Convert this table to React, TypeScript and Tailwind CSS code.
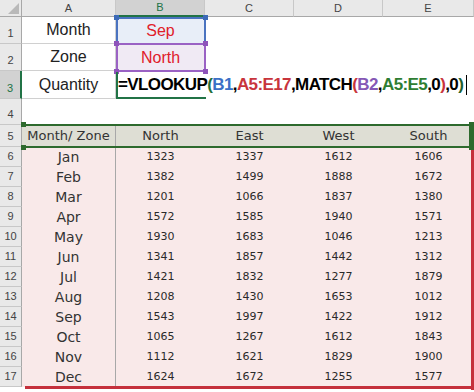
import React from "react";

const cols = ["A", "B", "C", "D", "E"];

const rows: [string, number, number, number, number][] = [
  ["Jan", 1323, 1337, 1612, 1606],
  ["Feb", 1382, 1499, 1888, 1672],
  ["Mar", 1201, 1066, 1837, 1380],
  ["Apr", 1572, 1585, 1940, 1571],
  ["May", 1930, 1683, 1046, 1213],
  ["Jun", 1341, 1857, 1442, 1312],
  ["Jul", 1421, 1832, 1277, 1879],
  ["Aug", 1208, 1430, 1653, 1012],
  ["Sep", 1543, 1997, 1422, 1912],
  ["Oct", 1065, 1267, 1612, 1843],
  ["Nov", 1112, 1621, 1829, 1900],
  ["Dec", 1624, 1672, 1255, 1577],
];

function RowHead({ n, active }: { n: number; active?: boolean }) {
  return (
    <div
      className={
        "flex items-end justify-center pb-[2px] text-[11px] border-b border-[#c8c8c8] " +
        (active
          ? "bg-[#d2d2d2] text-[#217346] border-r-2 border-r-[#217346]"
          : "bg-[#e9e9e9] text-[#444] border-r border-r-[#a8a8a8]")
      }
    >
      {n}
    </div>
  );
}

function Handle({ className }: { className: string }) {
  return <div className={"absolute w-[5px] h-[5px] " + className} />;
}

export default function App() {
  return (
    <div className="relative w-[474px] h-[392px] overflow-hidden bg-white font-['Liberation_Sans',sans-serif]">
      <div className="grid grid-cols-[22px_94px_89px_89px_89px_91px] grid-rows-[17px_27px_27px_28px_26px_22px_repeat(12,20px)]">
        {/* column headers */}
        <div className="relative bg-[#e9e9e9] border-r border-b border-[#a8a8a8]">
          <div className="absolute right-[2px] bottom-[2px] w-0 h-0 border-l-[11px] border-l-transparent border-b-[11px] border-b-[#b9b9b9]" />
        </div>
        {cols.map((c) => (
          <div
            key={c}
            className={
              "flex items-center justify-center text-[11px] border-r border-[#c8c8c8] " +
              (c === "B"
                ? "bg-[#d2d2d2] text-[#217346] border-b-2 border-b-[#217346]"
                : "bg-[#e9e9e9] text-[#444] border-b border-b-[#a8a8a8]")
            }
          >
            {c}
          </div>
        ))}

        {/* row 1 */}
        <RowHead n={1} />
        <div className="flex items-center justify-center text-[16px] text-[#222] border-r border-b border-[#d0d0d0]">Month</div>
        <div className="flex items-center justify-center text-[16px] text-[#e0202a] bg-[#e8eef8]">Sep</div>
        <div />
        <div />
        <div />

        {/* row 2 */}
        <RowHead n={2} />
        <div className="flex items-center justify-center text-[16px] text-[#222] border-r border-b border-[#d0d0d0]">Zone</div>
        <div className="flex items-center justify-center text-[16px] text-[#e0202a] bg-[#f0eaf4]">North</div>
        <div />
        <div />
        <div />

        {/* row 3 */}
        <RowHead n={3} active />
        <div className="flex items-center justify-center text-[16px] text-[#222] border-r border-b border-[#d0d0d0]">Quantity</div>
        <div className="col-span-4 flex items-center pl-[2px] whitespace-nowrap text-[17px] font-bold tracking-[-0.6px] text-black">
          <span>=VLOOKUP</span>
          <span className="text-[#1f6e3a]">(</span>
          <span className="text-[#3b6fc6]">B1</span>
          <span>,</span>
          <span className="text-[#c8343c]">A5:E17</span>
          <span>,MATCH</span>
          <span className="text-[#c8343c]">(</span>
          <span className="text-[#8557b5]">B2</span>
          <span>,</span>
          <span className="text-[#2e7d32]">A5:E5</span>
          <span>,0</span>
          <span className="text-[#c8343c]">)</span>
          <span>,0</span>
          <span className="text-[#1f5f2f]">)</span>
          <span className="ml-[3px] w-px h-[20px] bg-black" />
        </div>

        {/* row 4 */}
        <RowHead n={4} />
        <div className="col-span-5" />

        {/* row 5 header */}
        <RowHead n={5} />
        <div className="flex items-center justify-center text-[13px] text-[#333] bg-[#deded4] border-r border-[#a8a8a8] font-['DejaVu_Sans',sans-serif]">
          Month/ Zone
        </div>
        {["North", "East", "West", "South"].map((z) => (
          <div key={z} className="flex items-center justify-center text-[13px] text-[#333] bg-[#deded4] font-['DejaVu_Sans',sans-serif]">
            {z}
          </div>
        ))}

        {/* data */}
        {rows.map((r, i) => (
          <React.Fragment key={r[0]}>
            <RowHead n={i + 6} />
            <div className="flex items-center justify-center text-[14px] text-[#333] bg-[#f9e9e9] border-r border-[#a8a8a8] font-['DejaVu_Sans',sans-serif]">
              {r[0]}
            </div>
            {r.slice(1).map((v, j) => (
              <div key={j} className="flex items-center justify-center text-[11px] text-[#2a2a2a] bg-[#f9e9e9] font-['DejaVu_Sans',sans-serif]">
                {v}
              </div>
            ))}
          </React.Fragment>
        ))}
      </div>

      {/* B1 selection */}
      <div className="absolute left-[116px] top-[17px] w-[90px] h-[28px] border-2 border-[#4a73c0]" />
      {/* B2 selection */}
      <div className="absolute left-[116px] top-[43px] w-[90px] h-[29px] border-2 border-[#9a62c4]" />
      <Handle className="left-[114px] top-[15px] bg-[#3c6ab8]" />
      <Handle className="left-[203px] top-[15px] bg-[#3c6ab8]" />
      <Handle className="left-[114px] top-[41px] bg-[#8e54ba]" />
      <Handle className="left-[203px] top-[41px] bg-[#8e54ba]" />
      <Handle className="left-[114px] top-[69px] bg-[#8e54ba]" />
      <Handle className="left-[203px] top-[69px] bg-[#8e54ba]" />
      {/* B3 active */}
      <div className="absolute left-[116px] top-[72px] w-[2px] h-[27px] bg-[#217346]" />
      <div className="absolute left-[116px] top-[97px] w-[90px] h-[2px] bg-[#217346]" />

      {/* A5:E5 range */}
      <div className="absolute left-[23px] top-[124px] w-[451px] h-[24px] border-y-2 border-[#2d6a2d]" />
      <Handle className="left-[21px] top-[122px] bg-[#2d6a2d]" />
      <Handle className="left-[21px] top-[145px] bg-[#2d6a2d]" />
      <div className="absolute left-[469px] top-[122px] w-[5px] h-[28px] bg-[#2d6a2d]" />

      {/* A6:E17 range */}
      <div className="absolute left-[471px] top-[150px] w-[3px] h-[240px] bg-[#c5303c]" />
      <div className="absolute left-[25px] top-[386px] w-[449px] h-[3px] bg-[#c5303c]" />
    </div>
  );
}
